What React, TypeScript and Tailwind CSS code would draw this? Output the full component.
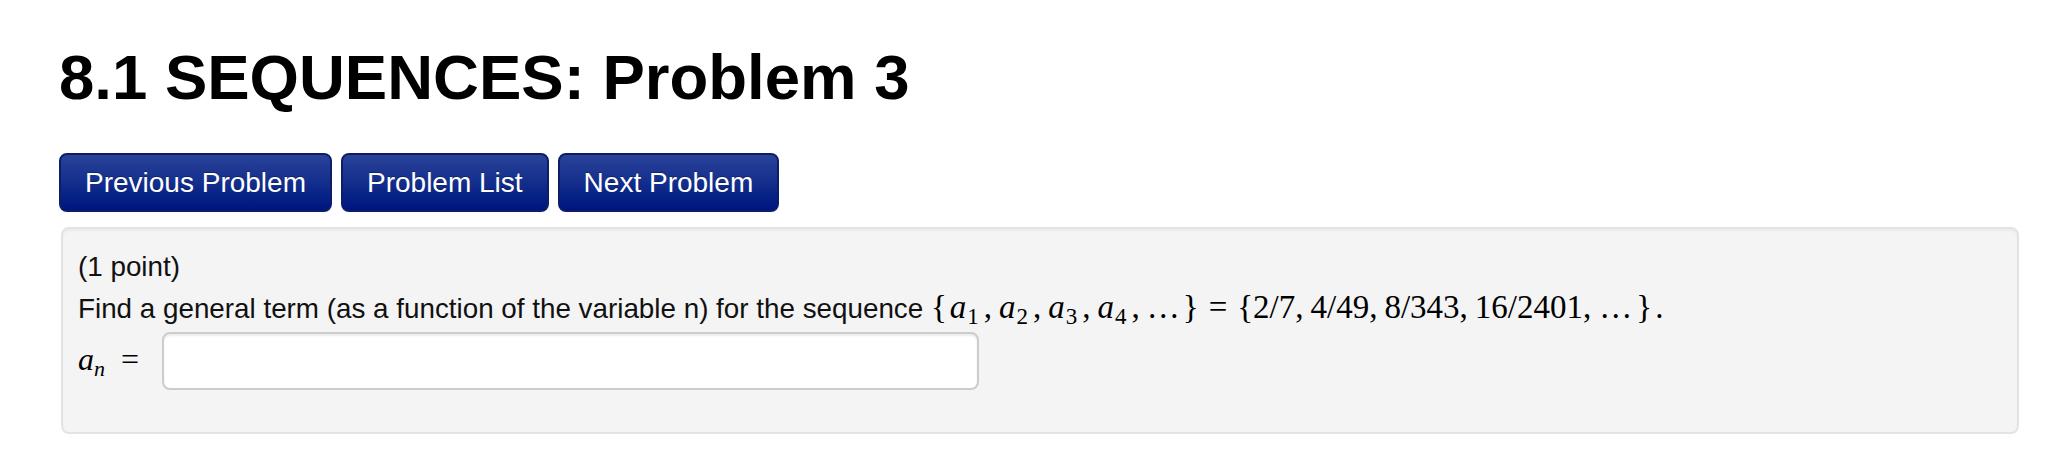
import React from "react";

function V({ v, s }: { v: string; s: string }) {
  return (
    <span className="whitespace-nowrap">
      <span className="italic">{v}</span>
      <span className="relative top-[6px] ml-[1px] text-[23px] leading-[40px] not-italic">{s}</span>
    </span>
  );
}

function Comma() {
  return <span className="ml-[5px] mr-[7px]">,</span>;
}

export default function App() {
  const buttons = ["Previous Problem", "Problem List", "Next Problem"];
  return (
    <div className="w-[2054px] h-[474px] bg-white pl-[61px] font-['Liberation_Sans',Arial,Helvetica,sans-serif] text-[#111] overflow-hidden">
      <h1 className="ml-[-2px] pt-[42px] text-[63.5px] leading-[70px] font-bold text-black">
        8.1 SEQUENCES: Problem 3
      </h1>
      <div className="mt-[41px] ml-[-2px] flex gap-[9px]">
        {buttons.map((l) => (
          <button
            key={l}
            className="h-[59px] px-[24px] rounded-[8px] border-2 border-[#0c1f66] bg-linear-to-b from-[#2a4399] to-[#00137f] text-white text-[28px] leading-[40px] [text-shadow:0_-1px_0_rgba(0,0,0,0.3)]"
          >
            {l}
          </button>
        ))}
      </div>
      <div className="mt-[15px] w-[1958px] h-[207px] rounded-[8px] border-2 border-[#e3e3e3] bg-[#f4f4f4] shadow-[inset_0_2px_2px_rgba(0,0,0,0.04)] pl-[15px] pt-[18px] text-[27.8px] leading-[40px]">
        <div>(1 point)</div>
        <div className="whitespace-nowrap">
          Find a general term (as a function of the variable n) for the sequence{" "}
          <span className="font-['Liberation_Serif','Times_New_Roman',serif] text-[33px] leading-[40px] text-black">
            <span className="mr-[3px]">{"{"}</span>
            <V v="a" s="1" />
            <Comma />
            <V v="a" s="2" />
            <Comma />
            <V v="a" s="3" />
            <Comma />
            <V v="a" s="4" />
            <Comma />
            <span>…</span>
            <span className="ml-[3px]">{"}"}</span>
            <span className="mx-[10px]">=</span>
            <span>{"{"}</span>
            <span>2/7,</span>
            <span className="ml-[7px]">4/49,</span>
            <span className="ml-[7px]">8/343,</span>
            <span className="ml-[7px]">16/2401,</span>
            <span className="ml-[8px]">…</span>
            <span className="ml-[4px]">{"}"}</span>
            <span className="ml-[3px]">.</span>
          </span>
        </div>
        <div className="flex items-start h-[60px]">
          <span className="mt-[8px] w-[84px] shrink-0 font-['Liberation_Serif','Times_New_Roman',serif] text-[32px] leading-[40px] text-black whitespace-nowrap">
            <span className="italic">a</span>
            <span className="relative top-[6px] text-[22px] italic">n</span>
            <span className="ml-[16px]">=</span>
          </span>
          <input
            type="text"
            className="mt-[1px] w-[817px] h-[58px] rounded-[8px] border-2 border-[#cccccc] bg-white shadow-[inset_0_2px_2px_rgba(0,0,0,0.075)] outline-none px-[12px]"
          />
        </div>
      </div>
    </div>
  );
}
